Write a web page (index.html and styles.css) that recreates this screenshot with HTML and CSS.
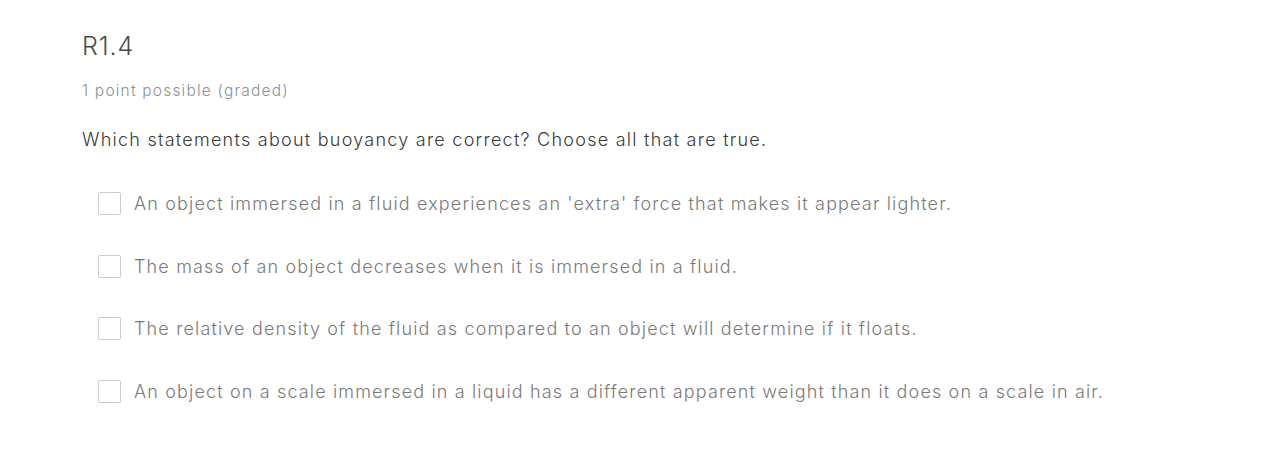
FILE: index.html
```html
<!DOCTYPE html>
<html lang="en">
<head>
    <meta charset="UTF-8">
    <title>R1.4</title>
    <link rel="stylesheet" href="styles.css">
</head>
<body>
    <div class="problem">
        <h3 class="problem-title">R1.4</h3>
        <div class="problem-progress">1 point possible (graded)</div>

        <p class="question">Which statements about buoyancy are correct? Choose all that are true.</p>

        <div class="choices">
            <label class="choice">
                <input type="checkbox" name="q1">
                <span class="choice-text">An object immersed in a fluid experiences an 'extra' force that makes it appear lighter.</span>
            </label>
            <label class="choice">
                <input type="checkbox" name="q1">
                <span class="choice-text">The mass of an object decreases when it is immersed in a fluid.</span>
            </label>
            <label class="choice">
                <input type="checkbox" name="q1">
                <span class="choice-text">The relative density of the fluid as compared to an object will determine if it floats.</span>
            </label>
            <label class="choice">
                <input type="checkbox" name="q1">
                <span class="choice-text">An object on a scale immersed in a liquid has a different apparent weight than it does on a scale in air.</span>
            </label>
        </div>
    </div>
</body>
</html>
```

FILE: styles.css
```css
/* General */
body {
    margin: 0;
    padding: 0;
    background-color: #ffffff;
    font-family: Inter, "Open Sans", Arial, sans-serif;
}

.problem {
    padding: 30px 82px;
}

.problem-title {
    margin: 0;
    font-size: 25px;
    font-weight: 300;
    color: #4a4a4a;
    line-height: 32px;
    letter-spacing: 0.9px;
}

.problem-progress {
    margin-top: 19px;
    font-size: 15.5px;
    color: #8a9199;
    font-weight: 300;
    letter-spacing: 1.2px;
}

.question {
    margin: 27px 0 0;
    font-size: 18px;
    color: #3a3a3a;
    font-weight: 300;
    line-height: 26px;
    letter-spacing: 1.25px;
}

/* Choices */
.choices {
    margin-top: 39px;
    display: flex;
    flex-direction: column;
    gap: 39.5px;
}

.choice {
    display: flex;
    align-items: center;
    gap: 13px;
    padding-left: 16px;
    font-size: 18px;
    color: #7a7a7a;
    font-weight: 300;
    letter-spacing: 1.15px;
    cursor: pointer;
}

.choice input {
    appearance: none;
    margin: 0;
    width: 23px;
    height: 23px;
    border: 1px solid #cccccc;
    border-radius: 2px;
    background: #fff;
    flex-shrink: 0;
}
```
